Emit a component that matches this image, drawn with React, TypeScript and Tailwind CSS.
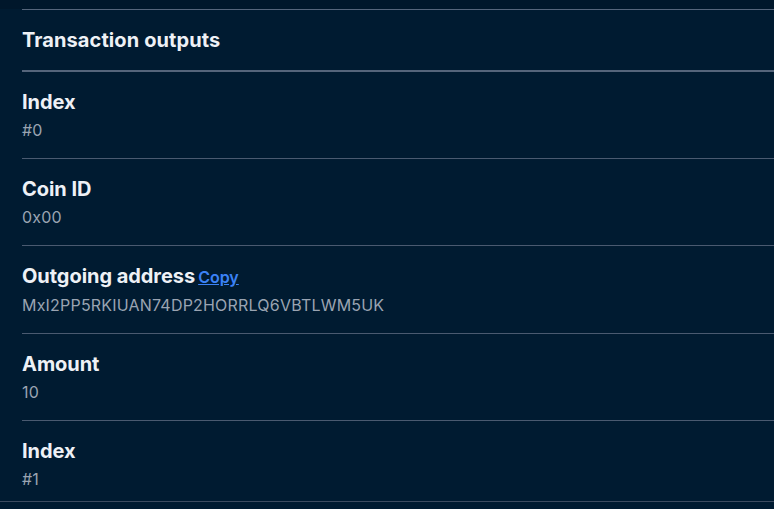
import React from 'react';

type Row = { label: string; value: string; copy?: boolean };

const rows: Row[] = [
  { label: 'Index', value: '#0' },
  { label: 'Coin ID', value: '0x00' },
  { label: 'Outgoing address', value: 'MxI2PP5RKIUAN74DP2HORRLQ6VBTLWM5UK', copy: true },
  { label: 'Amount', value: '10' },
  { label: 'Index', value: '#1' },
];

export default function App() {
  return (
    <div
      className="w-[774px] h-[509px] overflow-hidden bg-[#001b31] text-white"
      style={{ fontFamily: 'Inter, "Noto Sans", sans-serif' }}
    >
      <div className="h-[9px] bg-[#00172b]" />
      <div className="border-b border-[#3c4b60]">
        <div className="pl-[22px]">
          <div className="border-t border-[#55657b] h-[61px] flex items-center">
            <h2 className="text-[20px] font-bold tracking-[0.1px] text-[#eef1f6]">Transaction outputs</h2>
          </div>
          <div className="border-t-2 border-[#55657b]">
            {rows.map((r, i) => {
              const last = i === rows.length - 1;
              return (
                <div
                  key={i}
                  className={last ? 'pt-[18px] pb-[8px]' : 'pt-[18px] pb-[14px] border-b border-[#4a5a70]'}
                >
                  <div className="flex items-baseline gap-[3px] leading-[24px]">
                    <span className="text-[20px] font-bold tracking-[-0.05px] text-[#eef1f6]">{r.label}</span>
                    {r.copy && (
                      <a className="text-[16px] font-semibold text-[#3b82f6] underline cursor-pointer">Copy</a>
                    )}
                  </div>
                  <div className="mt-[2px] text-[16px] tracking-[0.2px] leading-[28px] text-[#9aa4b2]">{r.value}</div>
                </div>
              );
            })}
          </div>
        </div>
      </div>
    </div>
  );
}
